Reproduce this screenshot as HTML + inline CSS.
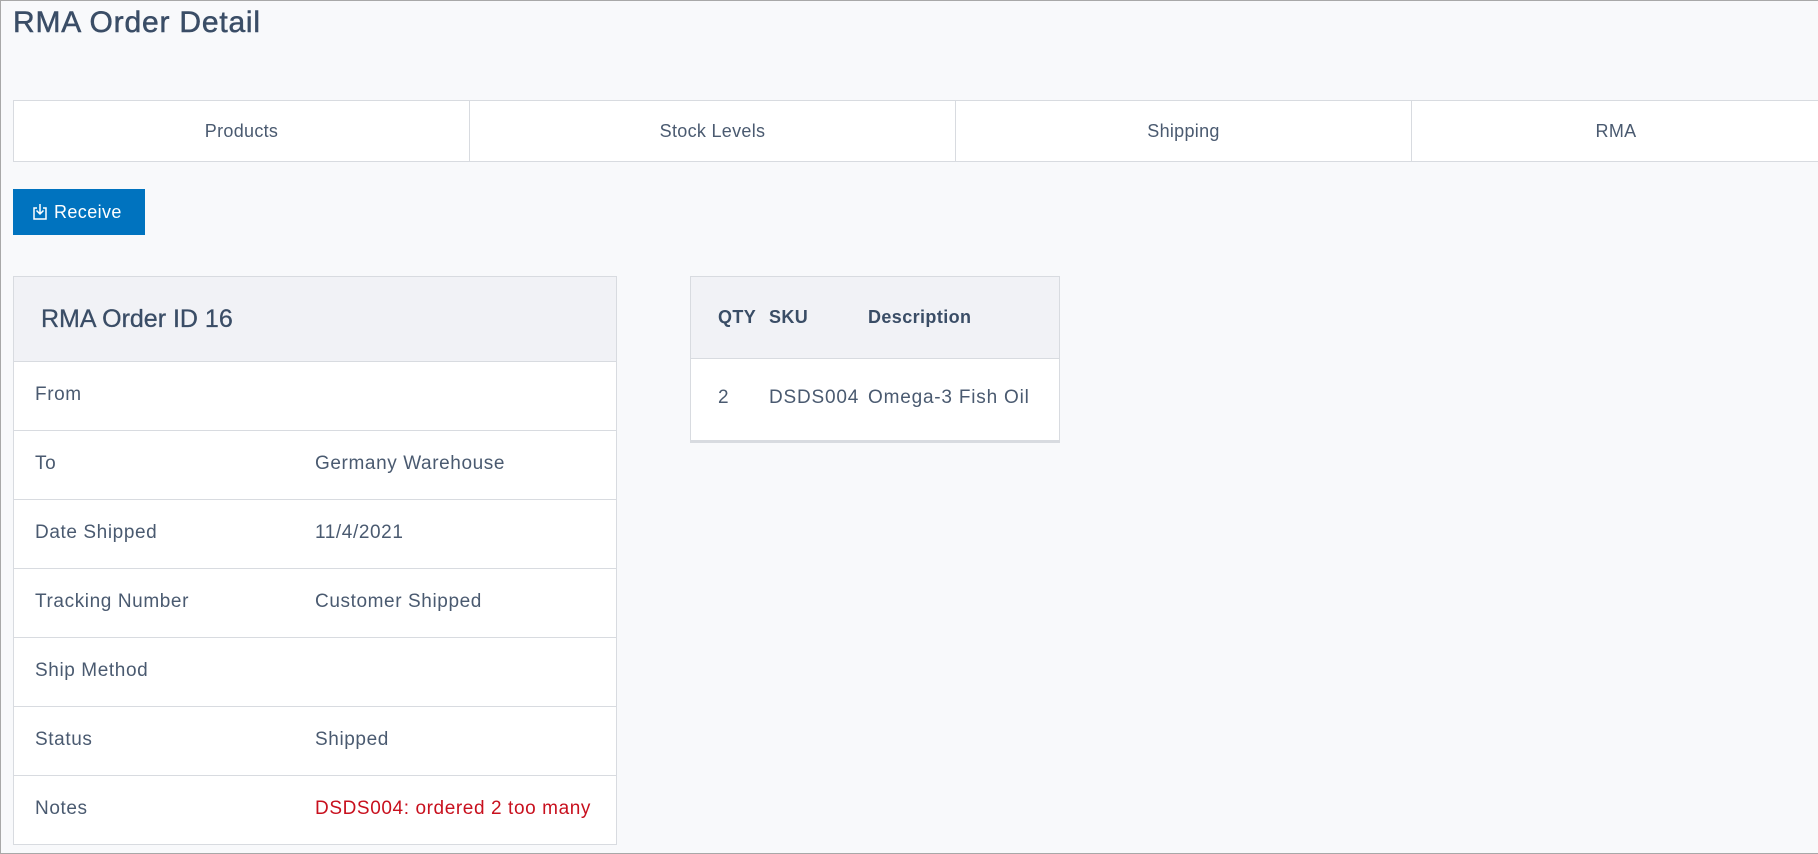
<!DOCTYPE html>
<html><head><meta charset="utf-8"><style>
*{box-sizing:border-box;margin:0;padding:0}
html,body{width:1818px;height:854px;overflow:hidden}
body{background:#f8f9fb;font-family:"Liberation Sans",sans-serif;color:#3d4f66;position:relative;border:1px solid #a8a8a8;border-right:none}
.abs{position:absolute}
h1{position:absolute;left:12px;top:5px;font-size:30px;font-weight:normal;color:#3a4d66;letter-spacing:0.8px;-webkit-text-stroke:0.5px #3a4d66}
.tabs{left:12px;top:99px;width:1806px;height:62px;background:#fff;border:1px solid #d8dbe0;border-right:none}
.tab{position:absolute;top:0;height:60px;line-height:60px;text-align:center;font-size:18px;color:#4a5a70;border-right:1px solid #d8dbe0;letter-spacing:0.3px}
.btn{left:12px;top:188px;width:132px;height:46px;background:#0073bf;color:#fff;font-size:18px;line-height:46px;letter-spacing:0.4px}
.card{left:12px;top:275px;width:604px;height:569px;background:#fff;border:1px solid #d8dbe0}
.ch{height:85px;background:#f1f2f6;border-bottom:1px solid #d8dbe0;font-size:25px;line-height:84px;padding-left:27px;color:#3a4d66;-webkit-text-stroke:0.3px #3a4d66}
.row{height:69px;border-bottom:1px solid #d8dbe0;position:relative;font-size:19px;line-height:66px;color:#4a5a70;letter-spacing:0.6px}
.row:last-child{border-bottom:none}
.row .l{position:absolute;left:21px}
.row .v{position:absolute;left:301px}
.tbl{left:689px;top:275px;width:370px;height:167px;background:#fff;border:1px solid #d8dbe0;border-bottom:3px solid #d8dbe0}
.th{height:82px;background:#f1f2f6;border-bottom:1px solid #d8dbe0;position:relative;font-weight:bold;font-size:18px;line-height:80px;color:#3a4d66;letter-spacing:0.4px}
.tr{position:relative;font-size:19px;line-height:78px;color:#4a5a70;letter-spacing:0.8px}
.th span,.tr span{position:absolute}
</style></head><body>
<h1>RMA Order Detail</h1>
<div class="abs tabs">
<div class="tab" style="left:0;width:456px">Products</div>
<div class="tab" style="left:456px;width:486px">Stock Levels</div>
<div class="tab" style="left:942px;width:456px">Shipping</div>
<div class="tab" style="left:1398px;width:408px;border-right:none">RMA</div>
</div>
<div class="abs btn"><svg class="abs" style="left:19px;top:14px" width="16" height="18" viewBox="0 0 16 18"><path d="M5 5H2v11h12V5h-3" fill="none" stroke="#fff" stroke-width="1.5"/><path d="M8 1v10M4.5 7.5L8 11l3.5-3.5" fill="none" stroke="#fff" stroke-width="1.5"/></svg><span class="abs" style="left:41px">Receive</span></div>
<div class="abs card">
<div class="ch">RMA Order ID 16</div>
<div class="row"><span class="l">From</span></div>
<div class="row"><span class="l">To</span><span class="v">Germany Warehouse</span></div>
<div class="row"><span class="l">Date Shipped</span><span class="v">11/4/2021</span></div>
<div class="row"><span class="l">Tracking Number</span><span class="v">Customer Shipped</span></div>
<div class="row"><span class="l">Ship Method</span></div>
<div class="row"><span class="l">Status</span><span class="v">Shipped</span></div>
<div class="row"><span class="l">Notes</span><span class="v" style="color:#c8101e">DSDS004: ordered 2 too many</span></div>
</div>
<div class="abs tbl">
<div class="th"><span style="left:27px">QTY</span><span style="left:78px">SKU</span><span style="left:177px">Description</span></div>
<div class="tr"><span style="left:27px">2</span><span style="left:78px">DSDS004</span><span style="left:177px">Omega-3 Fish Oil</span></div>
</div>
</body></html>
